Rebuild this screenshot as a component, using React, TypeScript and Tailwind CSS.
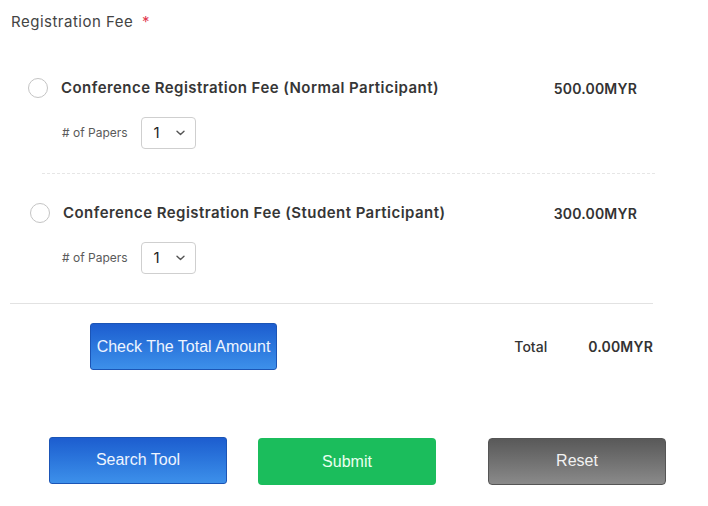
import React from "react";

function Chevron() {
  return (
    <svg width="9" height="6" viewBox="0 0 9 6" fill="none">
      <path d="M1 1.2 L4.5 4.6 L8 1.2" stroke="#555" strokeWidth="1.4" strokeLinecap="round" strokeLinejoin="round" />
    </svg>
  );
}

function Option({ title, price, radioMl }: { title: string; price: string; radioMl: string }) {
  return (
    <div className="flex flex-col">
      <div className="flex items-center h-6 w-[637px]">
        <div className={`w-5 h-5 rounded-full border border-[#c4c4c4] bg-white shrink-0 ${radioMl}`} />
        <div className="ml-[13px] flex-1 text-[15px] font-semibold text-[#363636] tracking-[0.45px]">{title}</div>
        <div className="text-[14px] font-semibold text-[#333] tracking-[0.2px]">{price}</div>
      </div>
      <div className="flex items-center mt-[17px] ml-[62px]">
        <span className="text-[12px] text-[#5a5a5a]">{"# of Papers"}</span>
        <div className="ml-[13px] w-[55px] h-[32px] border border-[#cfcfcf] rounded-[4px] flex items-center pl-[12px] pr-[10px] justify-between bg-white">
          <span className="text-[15px] text-[#222]">1</span>
          <Chevron />
        </div>
      </div>
    </div>
  );
}

export default function App() {
  return (
    <div className="w-[708px] h-[506px] bg-white overflow-hidden" style={{ fontFamily: "Inter, 'Noto Sans', sans-serif" }}>
      <div className="pt-[12px] pl-[11px] text-[15px] leading-[20px] text-[#444] tracking-[0.5px]">
        Registration Fee <span className="text-[#e23a4e] ml-[4px]">*</span>
      </div>
      <div className="mt-[44px]">
        <Option title="Conference Registration Fee (Normal Participant)" price="500.00MYR" radioMl="ml-[28px]" />
      </div>
      <div className="mt-[24px] ml-[42px] w-[613px] border-t border-dashed border-[#e6e6e6]" />
      <div className="mt-[27px]">
        <Option title="Conference Registration Fee (Student Participant)" price="300.00MYR" radioMl="ml-[30px]" />
      </div>
      <div className="mt-[29px] ml-[10px] w-[643px] border-t border-[#e2e2e2]" />
      <div className="mt-[19px] flex items-center w-[653px]">
        <button
          className="ml-[90px] w-[187px] h-[47px] rounded-[3px] border border-[#1b55b6] bg-gradient-to-b from-[#1d5dcf] to-[#3d90ea] text-[#eef4ff] text-[16px]"
          style={{ fontFamily: "'Liberation Sans', Arial, sans-serif" }}
        >
          Check The Total Amount
        </button>
        <div className="flex-1" />
        <span className="text-[14px] font-medium text-[#333]">Total</span>
        <span className="ml-[41px] text-[14px] font-semibold text-[#333] tracking-[0.2px]">0.00MYR</span>
      </div>
      <div className="mt-[65px] flex items-center" style={{ fontFamily: "'Liberation Sans', Arial, sans-serif" }}>
        <button className="ml-[49px] w-[178px] h-[47px] rounded-[3px] border border-[#1b55b6] bg-gradient-to-b from-[#1d5dcf] to-[#3d90ea] text-[#eef4ff] text-[16px]">
          Search Tool
        </button>
        <button className="ml-[31px] w-[178px] h-[47px] mt-[3px] rounded-[4px] bg-[#1bbd5c] text-[#eafff0] text-[16px]">
          Submit
        </button>
        <button className="ml-[52px] w-[178px] h-[47px] mt-[2px] rounded-[4px] border border-[#555] bg-gradient-to-b from-[#595959] to-[#8a8a8a] text-[#f2f2f2] text-[16px]">
          Reset
        </button>
      </div>
    </div>
  );
}
